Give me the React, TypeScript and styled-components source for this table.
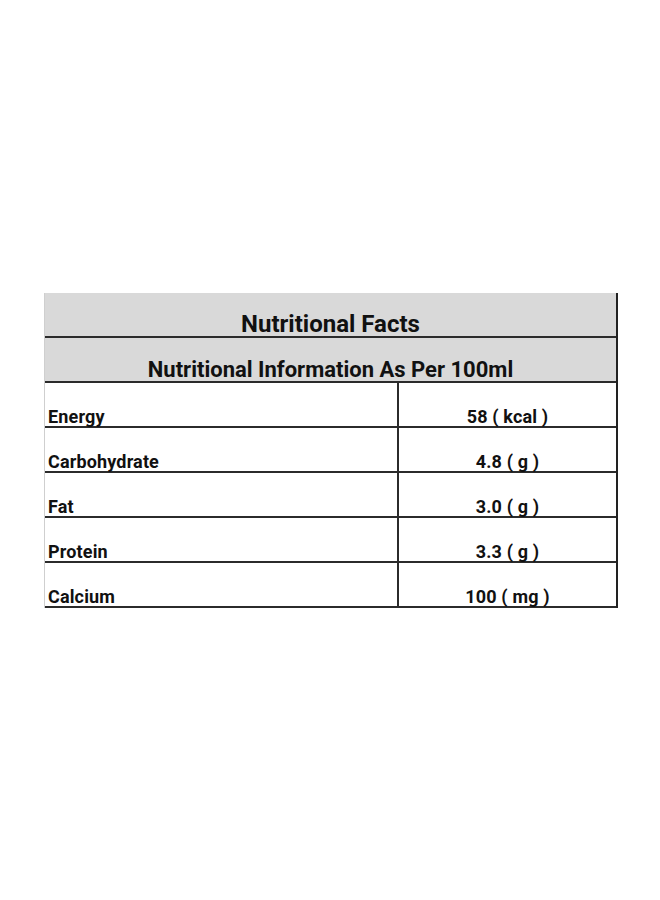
import React from 'react';
import styled, { createGlobalStyle } from 'styled-components';

const GlobalStyle = createGlobalStyle`
  body {
    margin: 0;
    background: #ffffff;
    font-family: Roboto, "Liberation Sans", sans-serif;
  }
`;

const Page = styled.div`
  width: 660px;
  height: 900px;
  padding: 293px 0 0 44px;
  box-sizing: border-box;
`;

const Table = styled.div`
  width: 574px;
  box-sizing: border-box;
  border-left: 1px solid #cfcfcf;
  border-right: 2px solid #222;
  color: #111;
  font-weight: 700;
  line-height: 1;
`;

const HeadRow = styled.div<{ size: number }>`
  height: 45px;
  display: flex;
  align-items: flex-end;
  justify-content: center;
  padding-bottom: 0;
  box-sizing: border-box;
  background: #d9d9d9;
  border-bottom: 2px solid #2b2b2b;
  font-size: ${({ size }) => size}px;
`;

const Row = styled.div`
  height: 45px;
  display: grid;
  grid-template-columns: 352px 1fr;
  border-bottom: 2px solid #2b2b2b;
  box-sizing: border-box;
  font-size: 18px;
  letter-spacing: 0.15px;
`;

const Cell = styled.div<{ center?: boolean }>`
  display: flex;
  align-items: flex-end;
  justify-content: ${({ center }) => (center ? 'center' : 'flex-start')};
  padding: 0 0 0 ${({ center }) => (center ? '0' : '3px')};
  border-left: ${({ center }) => (center ? '2px solid #2b2b2b' : 'none')};
`;

const rows = [
  ['Energy', '58 ( kcal )'],
  ['Carbohydrate', '4.8 ( g )'],
  ['Fat', '3.0 ( g )'],
  ['Protein', '3.3 ( g )'],
  ['Calcium', '100 ( mg )'],
];

const App: React.FC = () => (
  <>
    <GlobalStyle />
    <Page>
      <Table>
        <HeadRow size={24}>Nutritional Facts</HeadRow>
        <HeadRow size={22}>Nutritional Information As Per 100ml</HeadRow>
        {rows.map(([name, value]) => (
          <Row key={name}>
            <Cell>{name}</Cell>
            <Cell center>{value}</Cell>
          </Row>
        ))}
      </Table>
    </Page>
  </>
);

export default App;
